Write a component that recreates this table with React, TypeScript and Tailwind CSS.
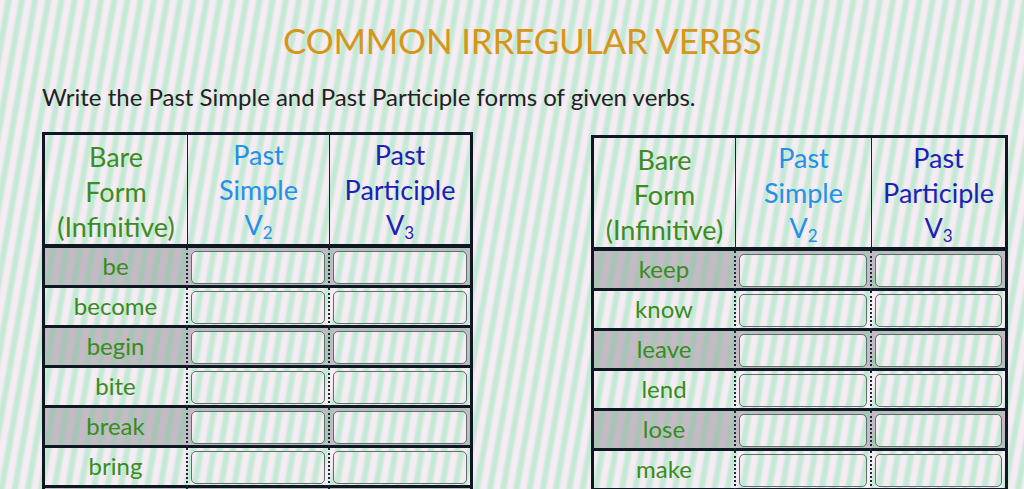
import React from "react";

const STRIPE =
  "bg-[repeating-linear-gradient(100deg,#f7ebf4_0px,#f7ebf4_4px,#c3ead4_7px,#c3ead4_10px,#f7ebf4_13px)]";
const GRAY =
  "bg-[repeating-linear-gradient(100deg,#c6b9c6_0px,#c6b9c6_4px,#a7c5b4_7px,#a7c5b4_10px,#c6b9c6_13px)]";

function Header({ widths }: { widths: string }) {
  return (
    <div className={`grid ${widths} border-b-[4px] border-[#0f1822] h-[113px] text-[27px]`}>
      <div className="flex flex-col items-center justify-center border-r-[1.5px] border-[#1a2430] text-[#3c8c24] leading-[35px] pt-[2px]">
        <span>Bare</span>
        <span>Form</span>
        <span>(Infinitive)</span>
      </div>
      <div className="flex flex-col items-center justify-center border-r-[1.5px] border-[#1a2430] text-[#2590e6] leading-[35px] pt-[2px]">
        <span>Past</span>
        <span>Simple</span>
        <span>
          V<span className="text-[17px] relative top-[4px]">2</span>
        </span>
      </div>
      <div className="flex flex-col items-center justify-center text-[#1c22b4] leading-[35px] pt-[2px]">
        <span>Past</span>
        <span>Participle</span>
        <span>
          V<span className="text-[17px] relative top-[4px]">3</span>
        </span>
      </div>
    </div>
  );
}

function Row({ word, gray, widths }: { word: string; gray: boolean; widths: string }) {
  return (
    <div className={`grid ${widths} h-[40px] border-b-[3px] border-[#0f1822] ${gray ? GRAY : ""}`}>
      <div className="flex items-center justify-center border-r-[2px] border-dotted border-[#1a2a34] text-[#3a8a22] pb-[3px]">
        {word}
      </div>
      <div className="p-[3px] border-r-[2px] border-dotted border-[#1a2a34]">
        <div className={`h-full rounded-[5px] border-[1.5px] border-[#5d6f6a] ${STRIPE}`} />
      </div>
      <div className="p-[3px]">
        <div className={`h-full rounded-[5px] border-[1.5px] border-[#5d6f6a] ${STRIPE}`} />
      </div>
    </div>
  );
}

function Table({ words, widths, w, mt }: { words: string[]; widths: string; w: string; mt: string }) {
  return (
    <div className={`${w} ${mt} border-[3px] border-b-0 border-[#0f1822] text-[24px]`}>
      <Header widths={widths} />
      {words.map((wd, i) => (
        <Row key={wd + i} word={wd} gray={i % 2 === 0} widths={widths} />
      ))}
    </div>
  );
}

export default function App() {
  return (
    <div
      className={`w-[1024px] h-[489px] overflow-hidden ${STRIPE}`}
      style={{ fontFamily: "Lato, 'Noto Sans', sans-serif" }}
    >
      <div className="pl-[283px] pt-[18px] h-[64px]">
        <h1 className="text-[35px] leading-[44px] text-[#d4971a] tracking-[-0.2px]">
          COMMON IRREGULAR VERBS
        </h1>
      </div>
      <p className="pl-[42px] mt-[18px] text-[24px] leading-[30px] text-[#222]">
        Write the Past Simple and Past Participle forms of given verbs.
      </p>
      <div className="flex pl-[42px] gap-[118px] mt-[20px]">
        <Table
          words={["be", "become", "begin", "bite", "break", "bring", ""]}
          widths="grid-cols-[143px_142px_1fr]"
          w="w-[431px]"
          mt="mt-0"
        />
        <Table
          words={["keep", "know", "leave", "lend", "lose", "make", ""]}
          widths="grid-cols-[142px_136px_1fr]"
          w="w-[417px]"
          mt="mt-[3px]"
        />
      </div>
    </div>
  );
}
